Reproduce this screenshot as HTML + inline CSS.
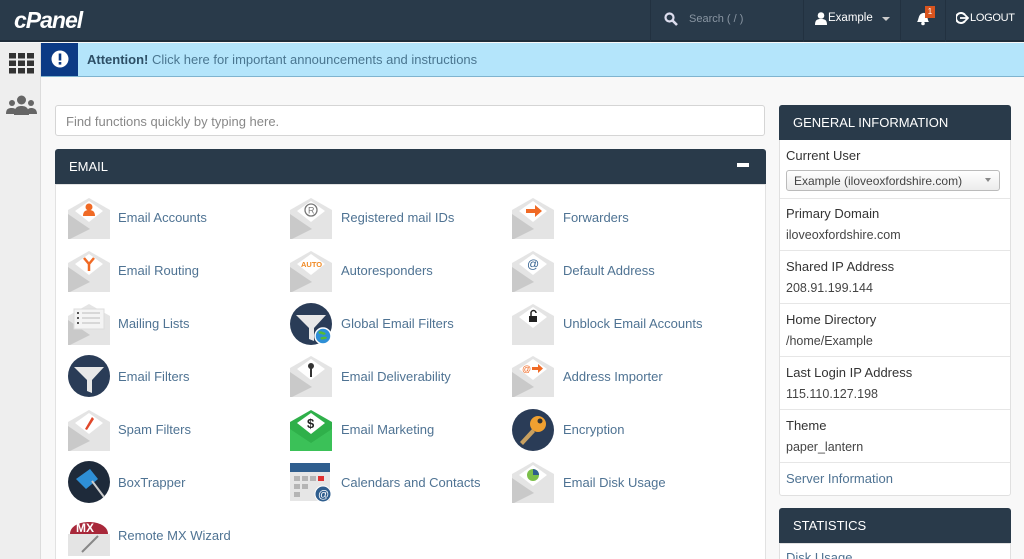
<!DOCTYPE html>
<html><head><meta charset="utf-8"><style>
*{margin:0;padding:0;box-sizing:border-box}
html,body{width:1024px;height:559px;overflow:hidden}
body{background:#f8f8f8;font-family:"Liberation Sans",sans-serif;position:relative}
.a{position:absolute}
.hdr{left:0;top:0;width:1024px;height:42px;background:#293a4a;border-bottom:2px solid #1f2d3a}
.logo{left:14px;top:7px;color:#fff;font:italic bold 23px "Liberation Sans",sans-serif;letter-spacing:-1px}
.sep{top:0;width:1px;height:42px;background:#223140}
.side{left:0;top:43px;width:41px;height:516px;background:#eeeeee;border-right:1px solid #dcdcdc}
.att{left:41px;top:43px;width:983px;height:34px;background:#b4e5fb;border-bottom:1px solid #7fb4cf}
.attl{left:41px;top:43px;width:37px;height:33px;background:#0b3a85}
.srch{left:55px;top:105px;width:710px;height:31px;background:#fff;border:1px solid #d5d5d5;border-radius:3px;color:#888;font-size:13px;padding:8px 10px}
.ph{left:55px;top:149px;width:711px;height:35px;background:#293a4a;color:#fff;font-size:13px;padding:10px 14px;border-radius:3px 3px 0 0}
.pb{left:55px;top:184px;width:711px;height:380px;background:#fff;border:1px solid #e2e2e2}
.it{font-size:13px;color:#4f7393;line-height:16px}
.ic{width:42px;height:42px}
.rp{left:779px;top:105px;width:232px;height:391px;background:#fff;border:1px solid #e0e0e0;border-radius:3px}
.rh{left:779px;width:232px;height:35px;background:#293a4a;color:#fff;font-size:13px;padding:10px 14px;border-radius:3px 3px 0 0}
.lb{font-size:13px;color:#333}
.vl{font-size:12.5px;color:#444}
.dv{left:780px;width:230px;height:1px;background:#e6e6e6}
</style></head><body>
<div class="a hdr"></div>
<div class="a logo">cPanel</div>
<div class="a sep" style="left:650px"></div><div class="a sep" style="left:803px"></div><div class="a sep" style="left:900px"></div><div class="a sep" style="left:945px"></div>
<svg class="a" style="left:664px;top:12px" width="14" height="14" viewBox="0 0 14 14"><circle cx="5.5" cy="5.5" r="4" fill="none" stroke="#dde" stroke-width="2.2"/><path d="M8.5 8.5L13 13" stroke="#dde" stroke-width="2.6"/></svg>
<div class="a" style="left:689px;top:13px;color:#8995a2;font-size:11px">Search ( / )</div>
<svg class="a" style="left:815px;top:12px" width="12" height="13" viewBox="0 0 12 13"><circle cx="6" cy="3.5" r="3.3" fill="#fff"/><path d="M0 13C0 8 2 7 6 7s6 1 6 6z" fill="#fff"/></svg>
<div class="a" style="left:828px;top:12px;color:#fff;font-size:11.5px">Example</div>
<div class="a" style="left:882px;top:17px;border:4px solid transparent;border-top:4px solid #ccc"></div>
<svg class="a" style="left:915px;top:10px" width="16" height="16" viewBox="0 0 16 16"><path d="M2 12C4 10 3 4 8 3s4 7 6 9z" fill="#fff"/><circle cx="8" cy="13.5" r="1.8" fill="#fff"/></svg>
<div class="a" style="left:925px;top:6px;width:10px;height:12px;background:#d9541e;color:#fff;font-size:8px;text-align:center;line-height:12px">1</div>
<svg class="a" style="left:956px;top:12px" width="13" height="12" viewBox="0 0 13 12"><path d="M9 3A5 5 0 1 0 9 9" stroke="#fff" stroke-width="2" fill="none"/><path d="M4 6H12M9 3L12 6L9 9" stroke="#fff" stroke-width="1.8" fill="none"/></svg>
<div class="a" style="left:970px;top:12px;color:#fff;font-size:11px;letter-spacing:-.3px">LOGOUT</div>

<div class="a side"></div>
<svg class="a" style="left:9px;top:53px" width="25" height="21" viewBox="0 0 25 21" fill="#333"><rect x="0" y="0" width="7" height="5.5"/><rect x="9" y="0" width="7" height="5.5"/><rect x="18" y="0" width="7" height="5.5"/><rect x="0" y="7.5" width="7" height="5.5"/><rect x="9" y="7.5" width="7" height="5.5"/><rect x="18" y="7.5" width="7" height="5.5"/><rect x="0" y="15" width="7" height="5.5"/><rect x="9" y="15" width="7" height="5.5"/><rect x="18" y="15" width="7" height="5.5"/></svg>
<svg class="a" style="left:6px;top:95px" width="31" height="22" viewBox="0 0 31 22" fill="#666"><circle cx="15.5" cy="5" r="4.5"/><circle cx="6" cy="8" r="3"/><circle cx="25" cy="8" r="3"/><path d="M8 20c0-7 3-9 7.5-9s7.5 2 7.5 9z"/><path d="M0 19c0-5 2-6 6-6s4 2 4 6z"/><path d="M21 19c0-4 1-6 4-6s6 1 6 6z"/></svg>

<div class="a att"></div>
<div class="a attl"></div>
<svg class="a" style="left:51px;top:50px" width="18" height="18" viewBox="0 0 18 18"><circle cx="9" cy="9" r="8.5" fill="#fff"/><rect x="7.7" y="3.5" width="2.6" height="7" fill="#0b3a85"/><rect x="7.7" y="12" width="2.6" height="2.6" fill="#0b3a85"/></svg>
<div class="a" style="left:87px;top:52px;font-size:13px;color:#4a7690"><b style="color:#2d4f66">Attention!</b> Click here for important announcements and instructions</div>

<div class="a srch">Find functions quickly by typing here.</div>
<div class="a ph">EMAIL</div>
<div class="a" style="left:737px;top:163px;width:12px;height:4px;background:#fff"></div>
<div class="a pb"></div>

<svg width="0" height="0" style="position:absolute"><defs>
<g id="env"><path d="M0 13L21 1L42 13V42H0Z" fill="#e4e4e4"/><path d="M0 42V17L22 32L2 42Z" fill="#c9c9c9"/><path d="M7 14L21 4L35 14L21 25Z" fill="#fff"/></g>
</defs></svg>

<svg class="a ic" style="left:68px;top:197px" viewBox="0 0 42 42"><use href="#env"/><circle cx="21" cy="10" r="3.5" fill="#f06a25"/><path d="M15 19c0-5 3-6 6-6s6 1 6 6z" fill="#f06a25"/></svg>
<div class="a it" style="left:118px;top:210px">Email Accounts</div>
<svg class="a ic" style="left:68px;top:250px" viewBox="0 0 42 42"><use href="#env"/><path d="M21 21V12M21 14L16 8M21 14L26 8" stroke="#f06a25" stroke-width="2.5" fill="none"/></svg>
<div class="a it" style="left:118px;top:263px">Email Routing</div>
<svg class="a ic" style="left:68px;top:303px" viewBox="0 0 42 42"><path d="M0 13L21 1L42 13V42H0Z" fill="#e4e4e4"/><path d="M0 42V17L22 32L2 42Z" fill="#c9c9c9"/><rect x="6" y="6" width="30" height="20" fill="#f4f4f4" stroke="#ddd"/><g fill="#555"><rect x="9" y="9" width="2" height="2"/><rect x="9" y="14" width="2" height="2"/><rect x="9" y="19" width="2" height="2"/></g><g stroke="#bbb"><path d="M14 10H32M14 15H32M14 20H32"/></g></svg>
<div class="a it" style="left:118px;top:316px">Mailing Lists</div>
<svg class="a ic" style="left:68px;top:355px" viewBox="0 0 42 42"><circle cx="21" cy="21" r="21" fill="#2a3c57"/><path d="M6 12H36L24 25V38L19 36V25Z" fill="#e8e8e8"/></svg>
<div class="a it" style="left:118px;top:369px">Email Filters</div>
<svg class="a ic" style="left:68px;top:409px" viewBox="0 0 42 42"><use href="#env"/><path d="M17 20L24 8L26 10L19 21Z" fill="#e0472a"/></svg>
<div class="a it" style="left:118px;top:422px">Spam Filters</div>
<svg class="a ic" style="left:68px;top:461px" viewBox="0 0 42 42"><circle cx="21" cy="21" r="21" fill="#1e2a3a"/><path d="M8 18L22 8L30 18L18 28Z" fill="#2e8fd6"/><path d="M24 20L36 36" stroke="#ccc" stroke-width="2"/></svg>
<div class="a it" style="left:118px;top:475px">BoxTrapper</div>
<svg class="a ic" style="left:68px;top:514px" viewBox="0 0 42 42"><path d="M2 20C2 4 40 4 40 20Z" fill="#a8283a"/><text x="8" y="18" font-size="12" font-weight="bold" fill="#fff" font-family="Liberation Sans">MX</text><rect x="0" y="20" width="42" height="22" fill="#e4e4e4"/><path d="M14 38L30 22" stroke="#888" stroke-width="2"/></svg>
<div class="a it" style="left:118px;top:528px">Remote MX Wizard</div>

<svg class="a ic" style="left:290px;top:197px" viewBox="0 0 42 42"><use href="#env"/><circle cx="21" cy="13" r="6" fill="none" stroke="#777" stroke-width="1.3"/><text x="18" y="16.5" font-size="9" fill="#777" font-family="Liberation Sans">R</text></svg>
<div class="a it" style="left:341px;top:210px">Registered mail IDs</div>
<svg class="a ic" style="left:290px;top:250px" viewBox="0 0 42 42"><use href="#env"/><text x="11" y="17" font-size="7.5" font-weight="bold" fill="#f08a25" font-family="Liberation Sans">AUTO</text></svg>
<div class="a it" style="left:341px;top:263px">Autoresponders</div>
<svg class="a ic" style="left:290px;top:303px" viewBox="0 0 42 42"><circle cx="21" cy="21" r="21" fill="#2a3c57"/><path d="M6 12H36L24 25V38L19 36V25Z" fill="#e8e8e8"/><circle cx="33" cy="33" r="8" fill="#2e8fd6" stroke="#fff" stroke-width="1.5"/><path d="M29 30c3-2 4 2 6 0M31 36c2-2 4 0 5-2" stroke="#5b3" stroke-width="2.5"/></svg>
<div class="a it" style="left:341px;top:316px">Global Email Filters</div>
<svg class="a ic" style="left:290px;top:355px" viewBox="0 0 42 42"><use href="#env"/><circle cx="21" cy="11" r="3" fill="#333"/><rect x="20" y="12" width="2" height="10" fill="#333"/></svg>
<div class="a it" style="left:341px;top:369px">Email Deliverability</div>
<svg class="a ic" style="left:290px;top:409px" viewBox="0 0 42 42"><path d="M0 13L21 1L42 13V42H0Z" fill="#2fb04a"/><path d="M0 42V20L21 34L42 20V42Z" fill="#3bc158"/><path d="M7 14L21 4L35 14L21 25Z" fill="#fff"/><text x="17" y="19" font-size="13" font-weight="bold" fill="#222" font-family="Liberation Sans">$</text></svg>
<div class="a it" style="left:341px;top:422px">Email Marketing</div>
<svg class="a ic" style="left:290px;top:461px" viewBox="0 0 42 42"><rect x="0" y="2" width="40" height="38" fill="#e6e6e6"/><rect x="0" y="2" width="40" height="9" fill="#2f5e8e"/><g fill="#b5b5b5"><rect x="4" y="15" width="6" height="5"/><rect x="12" y="15" width="6" height="5"/><rect x="20" y="15" width="6" height="5"/><rect x="4" y="23" width="6" height="5"/><rect x="12" y="23" width="6" height="5"/><rect x="4" y="31" width="6" height="5"/></g><rect x="28" y="15" width="6" height="5" fill="#e03030"/><circle cx="33" cy="33" r="8" fill="#2f5e8e" stroke="#fff"/><text x="28" y="37" font-size="11" fill="#fff" font-family="Liberation Sans">@</text></svg>
<div class="a it" style="left:341px;top:475px">Calendars and Contacts</div>

<svg class="a ic" style="left:512px;top:197px" viewBox="0 0 42 42"><use href="#env"/><path d="M14 12H23V8L30 14L23 20V16H14Z" fill="#f06a25"/></svg>
<div class="a it" style="left:563px;top:210px">Forwarders</div>
<svg class="a ic" style="left:512px;top:250px" viewBox="0 0 42 42"><use href="#env"/><text x="15" y="18" font-size="12" fill="#2f5e8e" font-family="Liberation Sans">@</text></svg>
<div class="a it" style="left:563px;top:263px">Default Address</div>
<svg class="a ic" style="left:512px;top:303px" viewBox="0 0 42 42"><path d="M0 13L21 1L42 13V42H0Z" fill="#e4e4e4"/><path d="M7 14L21 4L35 14L21 25Z" fill="#fff"/><rect x="17" y="13" width="8" height="6" fill="#222"/><path d="M19 13V10a2.5 2.5 0 015 0" stroke="#222" fill="none" stroke-width="1.5"/></svg>
<div class="a it" style="left:563px;top:316px">Unblock Email Accounts</div>
<svg class="a ic" style="left:512px;top:355px" viewBox="0 0 42 42"><use href="#env"/><text x="10" y="17" font-size="9" fill="#f06a25" font-family="Liberation Sans">@</text><path d="M20 12H26V9L31 13.5L26 18V15H20Z" fill="#f06a25"/></svg>
<div class="a it" style="left:563px;top:369px">Address Importer</div>
<svg class="a ic" style="left:512px;top:409px" viewBox="0 0 42 42"><circle cx="21" cy="21" r="21" fill="#2a3c57"/><circle cx="26" cy="15" r="8" fill="#f0a030"/><path d="M20 20L8 33L11 36L23 23" fill="#c8a060"/><circle cx="28" cy="12" r="2.5" fill="#333"/></svg>
<div class="a it" style="left:563px;top:422px">Encryption</div>
<svg class="a ic" style="left:512px;top:461px" viewBox="0 0 42 42"><use href="#env"/><circle cx="21" cy="14" r="6" fill="#7cc04a"/><path d="M21 14V8A6 6 0 0127 14Z" fill="#2f5e8e"/></svg>
<div class="a it" style="left:563px;top:475px">Email Disk Usage</div>

<div class="a rp"></div>
<div class="a rh" style="top:105px">GENERAL INFORMATION</div>
<div class="a lb" style="left:786px;top:148px">Current User</div>
<div class="a" style="left:786px;top:170px;width:214px;height:21px;border:1px solid #bbb;border-radius:3px;background:linear-gradient(#fff,#ececec);font-size:12px;color:#444;padding:3px 7px">Example (iloveoxfordshire.com)</div>
<div class="a" style="left:985px;top:178px;border:3px solid transparent;border-top:4px solid #888"></div>
<div class="a dv" style="top:198px"></div>
<div class="a lb" style="left:786px;top:206px">Primary Domain</div><div class="a vl" style="left:786px;top:228px">iloveoxfordshire.com</div>
<div class="a dv" style="top:250px"></div>
<div class="a lb" style="left:786px;top:259px">Shared IP Address</div><div class="a vl" style="left:786px;top:281px">208.91.199.144</div>
<div class="a dv" style="top:303px"></div>
<div class="a lb" style="left:786px;top:312px">Home Directory</div><div class="a vl" style="left:786px;top:334px">/home/Example</div>
<div class="a dv" style="top:356px"></div>
<div class="a lb" style="left:786px;top:365px">Last Login IP Address</div><div class="a vl" style="left:786px;top:387px">115.110.127.198</div>
<div class="a dv" style="top:409px"></div>
<div class="a lb" style="left:786px;top:418px">Theme</div><div class="a vl" style="left:786px;top:440px">paper_lantern</div>
<div class="a dv" style="top:462px"></div>
<div class="a it" style="left:786px;top:471px">Server Information</div>
<div class="a rh" style="top:508px">STATISTICS</div>
<div class="a" style="left:779px;top:543px;width:232px;height:20px;background:#fff;border:1px solid #e0e0e0"></div>
<div class="a it" style="left:786px;top:550px">Disk Usage</div>
</body></html>
